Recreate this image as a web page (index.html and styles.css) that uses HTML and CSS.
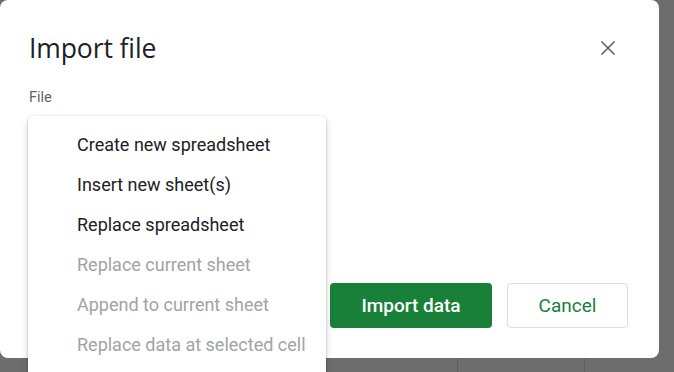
FILE: index.html
```html
<!DOCTYPE html>
<html>
<head>
<meta charset="utf-8">
<link rel="stylesheet" href="styles.css">
</head>
<body>
<div class="dialog">
  <div class="header">
    <h1 class="title">Import file</h1>
    <button class="close" aria-label="Close">
      <svg width="16" height="16" viewBox="0 0 16 16"><path d="M1.5 1.5 L14.5 14.5 M14.5 1.5 L1.5 14.5" stroke="#5f6368" stroke-width="1.6" fill="none"/></svg>
    </button>
  </div>
  <div class="label">File</div>
  <div class="actions">
    <button class="btn primary">Import data</button>
    <button class="btn secondary">Cancel</button>
  </div>
</div>
<ul class="menu">
  <li class="item">Create new spreadsheet</li>
  <li class="item">Insert new sheet(s)</li>
  <li class="item">Replace spreadsheet</li>
  <li class="item disabled">Replace current sheet</li>
  <li class="item disabled">Append to current sheet</li>
  <li class="item disabled">Replace data at selected cell</li>
</ul>
</body>
</html>
```
FILE: styles.css
```css
html, body {
  margin: 0;
  padding: 0;
  width: 674px;
  height: 372px;
  overflow: hidden;
}
body {
  background-color: #6d6d6d;
  background-image:
    repeating-linear-gradient(to bottom, transparent 0, transparent 27px, #777777 27px, #777777 28px),
    linear-gradient(to right, transparent 457px, #606060 457px, #606060 458px, transparent 458px, transparent 584px, #606060 584px, #606060 585px, transparent 585px);
  background-size: 674px 26.2px, 674px 372px;
  font-family: Roboto, "Liberation Sans", sans-serif;
  position: relative;
}
.dialog {
  width: 659px;
  height: 358px;
  background: #fff;
  border-radius: 8px;
  box-sizing: border-box;
  padding: 28px 31px 0 29px;
  display: flex;
  flex-direction: column;
}
.header {
  display: flex;
  align-items: center;
  justify-content: space-between;
  height: 40px;
}
.title {
  margin: 0;
  font-family: "Open Sans", Roboto, sans-serif;
  font-weight: 400;
  font-size: 26.5px;
  color: #202124;
  letter-spacing: -0.1px;
}
.close {
  border: 0;
  background: none;
  padding: 0;
  width: 16px;
  height: 16px;
  margin-right: 12px;
  display: flex;
}
.label {
  margin-top: 22px;
  font-size: 14.5px;
  color: #5f6368;
  line-height: 16px;
}
.actions {
  margin-top: auto;
  margin-bottom: 30px;
  display: flex;
  justify-content: flex-end;
  gap: 15px;
}
.btn {
  height: 45px;
  border-radius: 4px;
  font-family: Roboto, sans-serif;
  font-size: 19px;
  font-weight: 500;
  box-sizing: border-box;
  cursor: pointer;
  padding: 0;
}
.primary {
  width: 162px;
  background: #188038;
  color: #fff;
  border: 0;
}
.secondary {
  width: 121px;
  background: #fff;
  color: #188038;
  border: 1px solid #dadce0;
  font-weight: 400;
}
.menu {
  position: absolute;
  left: 28px;
  top: 116px;
  width: 298px;
  margin: 0;
  padding: 9px 0 0;
  list-style: none;
  background: #fff;
  border-radius: 5px;
  box-shadow: 0 1px 3px rgba(0,0,0,0.25), 0 4px 10px rgba(0,0,0,0.12);
  height: 270px;
  box-sizing: border-box;
}
.item {
  height: 40px;
  line-height: 40px;
  padding-left: 49px;
  font-size: 18px;
  color: #202124;
  white-space: nowrap;
}
.item.disabled {
  color: #a0a3a7;
}
```
